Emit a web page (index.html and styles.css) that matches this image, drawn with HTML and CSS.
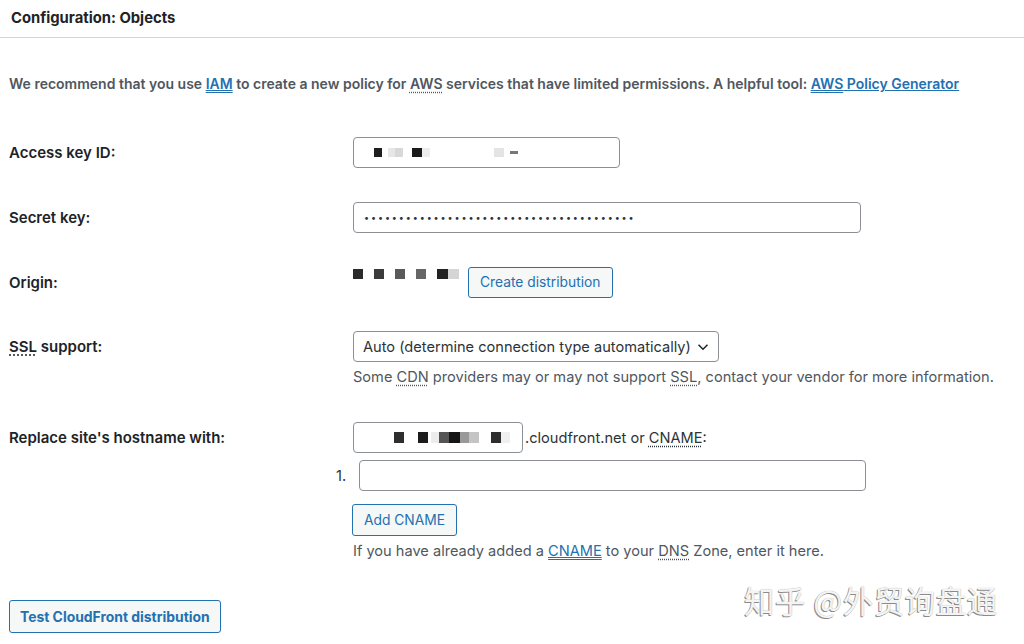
FILE: index.html
```html
<!DOCTYPE html>
<html>
<head>
<meta charset="utf-8">
<link rel="stylesheet" href="styles.css">
</head>
<body>
<div class="page">
  <h2 class="title">Configuration: Objects</h2>
  <p class="intro">We recommend that you use <a href="#"><abbr>IAM</abbr></a> to create a new policy for <abbr>AWS</abbr> services that have limited permissions. A helpful tool: <a href="#"><abbr>AWS</abbr> Policy Generator</a></p>

  <div class="form">
    <div class="row">
      <div class="label">Access key ID:</div>
      <div class="field">
        <div class="input w-short">
          <span class="blur">
            <i style="width:8px;background:#1e1e1e"></i><i style="width:6px;background:transparent"></i><i style="width:7px;background:#e6e6e6"></i><i style="width:8px;background:#d8d8d8"></i><i style="width:9px;background:transparent"></i><i style="width:10px;background:#1a1a1a"></i><i style="width:8px;background:#ececec"></i><i style="width:64px;background:transparent"></i><i style="width:10px;background:#e4e4e4"></i><i style="width:6px;background:transparent"></i><i style="width:8px;height:3px;background:#777"></i>
          </span>
        </div>
      </div>
    </div>

    <div class="row">
      <div class="label">Secret key:</div>
      <div class="field">
        <div class="input w-long"><span class="dots">•••••••••••••••••••••••••••••••••••••••</span></div>
      </div>
    </div>

    <div class="row row-origin">
      <div class="label">Origin:</div>
      <div class="field origin">
        <span class="squares">
          <i style="background:#2b2b2b"></i><i style="background:#3b3b3b"></i><i style="background:#5a5a5a"></i><i style="background:#666"></i><i class="pair"><b style="background:#222"></b><b style="background:#d5d5d5"></b></i>
        </span>
        <button class="btn btn-create">Create distribution</button>
      </div>
    </div>

    <div class="row">
      <div class="label"><abbr>SSL</abbr> support:</div>
      <div class="field">
        <div class="select">Auto (determine connection type automatically)
          <svg class="chev" width="12" height="8" viewBox="0 0 12 8"><path d="M1.5 1.8 6 6.2l4.5-4.4" fill="none" stroke="#1d2327" stroke-width="1.5"/></svg>
        </div>
        <p class="help">Some <abbr>CDN</abbr> providers may or may not support <abbr>SSL</abbr>, contact your vendor for more information.</p>
      </div>
    </div>

    <div class="row">
      <div class="label">Replace site's hostname with:</div>
      <div class="field">
        <div class="inline">
          <div class="input w-host">
            <span class="blur host">
              <i style="width:10px;background:#2e2e2e"></i><i style="width:14px;background:transparent"></i><i style="width:10px;background:#1c1c1c"></i><i style="width:3px;background:transparent"></i><i style="width:8px;background:#ececec"></i><i style="width:10px;background:#555"></i><i style="width:11px;background:#151515"></i><i style="width:9px;background:#999"></i><i style="width:10px;background:#c4c4c4"></i><i style="width:12px;background:transparent"></i><i style="width:10px;background:#2e2e2e"></i><i style="width:9px;background:#efefef"></i>
            </span>
          </div>
          <span class="suffix">.cloudfront.net or <abbr>CNAME</abbr>:</span>
        </div>
        <ol class="cnames">
          <li><span class="num">1.</span><div class="input w-cname"></div></li>
        </ol>
        <button class="btn btn-add">Add CNAME</button>
        <p class="help">If you have already added a <a href="#"><abbr>CNAME</abbr></a> to your <abbr>DNS</abbr> Zone, enter it here.</p>
      </div>
    </div>
  </div>

  <button class="btn btn-bold">Test CloudFront distribution</button>

  <div class="watermark">知乎 @外贸询盘通</div>
</div>
</body>
</html>
```

FILE: styles.css
```css
* { box-sizing: border-box; }
html, body { margin: 0; padding: 0; background: #fff; }
body {
  font-family: "Inter", "Liberation Sans", "Noto Sans CJK SC", sans-serif;
  color: #1d2327;
  width: 1024px;
  height: 644px;
  overflow: hidden;
}
.page { position: relative; height: 644px; }

.title {
  margin: 0;
  padding: 9px 11px 10px;
  font-size: 14.8px;
  font-weight: 700;
  line-height: 18px;
  border-bottom: 1px solid #d4d4d4;
  height: 38px;
}

.intro {
  margin: 36px 0 0;
  padding: 0 9px;
  font-size: 14px;
  font-weight: 600;
  color: #50575e;
  line-height: 20px;
}
.intro a, .help a { color: #2271b1; text-decoration: underline; }
abbr { text-decoration: underline dotted; text-underline-offset: 3px; }
a abbr { text-decoration: underline; }

.form { margin-top: 26px; }
.row { display: flex; padding: 17px 0; }
.row-origin { padding-bottom: 16px; }
.label {
  width: 353px;
  flex: none;
  padding-left: 9px;
  font-size: 15px;
  font-weight: 600;
  line-height: 31px;
  color: #1d2327;
}
.field { flex: none; font-size: 14.6px; }
.inline { display: flex; align-items: center; }
.origin { display: flex; align-items: flex-start; }

.input {
  height: 31px;
  border: 1px solid #8c8f94;
  border-radius: 4px;
  background: #fff;
  display: flex;
  align-items: center;
}
.w-short { width: 267px; }
.w-long { width: 508px; }
.w-host { width: 170px; }
.w-cname { width: 507px; }

.blur { display: flex; align-items: center; padding-left: 20px; filter: blur(0.6px); }
.blur i { display: block; height: 9px; }
.blur.host { padding-left: 40px; }
.blur.host i { height: 11px; }

.dots { padding-left: 10px; font-size: 9px; letter-spacing: 1.9px; color: #2c3338; line-height: 1; }

.squares { display: flex; gap: 11px; margin-right: 9px; margin-top: 2px; filter: blur(0.5px); }
.squares i { display: block; width: 10px; height: 10px; }
.squares i.pair { display: flex; width: 22px; }
.squares i.pair b { display: block; width: 11px; height: 10px; }

.btn {
  font-family: inherit;
  height: 32px;
  padding: 0 11px;
  font-size: 13.8px;
  color: #2271b1;
  background: #f6f7f7;
  border: 1px solid #2271b1;
  border-radius: 3px;
  line-height: 30px;
  cursor: pointer;
  display: block;
}
.btn-create { height: 31px; line-height: 29px; }
.btn-add { margin-top: 13px; margin-left: -1px; }
.btn-bold { font-weight: 700; margin: 21px 0 0 9px; height: 33px; font-size: 13.9px; padding: 0 10px; }

.select {
  width: 366px;
  height: 31px;
  border: 1px solid #8c8f94;
  border-radius: 4px;
  padding: 0 9px;
  display: flex;
  align-items: center;
  justify-content: space-between;
  font-size: 14.6px;
  color: #2c3338;
}
.chev { margin-left: 6px; }

.help {
  margin: 4px 0 0;
  line-height: 22px;
  color: #50575e;
  font-size: 14.6px;
}

.suffix { margin-left: 2px; color: #2c3338; }

.cnames { list-style: none; margin: 7px 0 0 -17px; padding: 0; }
.cnames li { display: flex; align-items: center; font-size: 14.6px; color: #2c3338; }
.num { width: 23px; }

.watermark {
  position: absolute;
  left: 744px;
  top: 578px;
  font-family: "Noto Sans CJK SC", sans-serif;
  font-size: 30.5px;
  letter-spacing: 0.5px;
  color: #f4f4f4;
  text-shadow: -1px 1px 0 #8a8a8a, 0 0 1px #999;
}
```
